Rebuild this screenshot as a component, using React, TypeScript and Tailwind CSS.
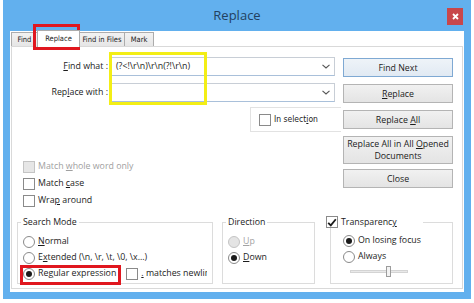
import React from "react";

function Acc({ children }: { children: React.ReactNode }) {
    return <u className="underline underline-offset-[1px]">{children}</u>;
}

function Checkbox({ checked = false, disabled = false }: { checked?: boolean; disabled?: boolean }) {
    return (
        <span
            className={`flex h-[12px] w-[12px] shrink-0 items-center justify-center border ${
                disabled ? "border-[#c4c4c4] bg-[#e6e6e6]" : "border-[#8a8a8a] bg-white"
            }`}
        >
            {checked && (
                <svg width="10" height="9" viewBox="0 0 10 9">
                    <path d="M1.2 4.8 L3.8 7.4 L8.8 1.2" fill="none" stroke="#1b1b1b" strokeWidth="1.8" />
                </svg>
            )}
        </span>
    );
}

function Radio({ checked = false, disabled = false }: { checked?: boolean; disabled?: boolean }) {
    return (
        <span
            className={`flex h-[12px] w-[12px] shrink-0 items-center justify-center rounded-full border ${
                disabled ? "border-[#c4c4c4] bg-[#e4e4e4]" : "border-[#8a8a8a] bg-white"
            }`}
        >
            {checked && <span className="h-[6px] w-[6px] rounded-full bg-[#1b1b1b]" />}
        </span>
    );
}

function Chevron() {
    return (
        <svg width="8" height="5" viewBox="0 0 8 5" className="mr-[4px]">
            <path d="M0.5 0.8 L4 4 L7.5 0.8" fill="none" stroke="#555" strokeWidth="1.1" />
        </svg>
    );
}

function Combo({ value }: { value?: string }) {
    return (
        <div className="ml-[3px] flex h-[19px] w-[224px] items-center justify-between border border-[#c8ced6] border-b-[#a9c0da] bg-white">
            <span className="pl-[4px] leading-none">{value}</span>
            <Chevron />
        </div>
    );
}

function Button({
    children,
    primary = false,
    className = "",
}: {
    children: React.ReactNode;
    primary?: boolean;
    className?: string;
}) {
    return (
        <div
            className={`flex items-center justify-center border text-center leading-[12px] ${
                primary
                    ? "border-[#7fa9d3] bg-gradient-to-b from-[#eef3f8] to-[#e1eaf3]"
                    : "border-[#b4b4b4] bg-gradient-to-b from-[#f1f1f1] to-[#e4e4e4]"
            } ${className}`}
        >
            {children}
        </div>
    );
}

function Tab({ label, active = false, width }: { label: string; active?: boolean; width: string }) {
    return (
        <div
            className={`-ml-px flex items-center justify-center border border-[#acacac] font-['DejaVu_Sans_Condensed','DejaVu_Sans',sans-serif] text-[7.5px] ${width} ${
                active
                    ? "relative z-10 -mb-px h-[17px] border-b-0 bg-white"
                    : "h-[14px] border-b-0 bg-gradient-to-b from-[#f2f2f2] to-[#e6e6e6]"
            }`}
        >
            {label}
        </div>
    );
}

export default function App() {
    return (
        <div className="relative h-[303px] w-[474px] bg-white font-['Open_Sans',sans-serif] text-[8.8px] text-[#1c1c1c]">
            <div className="ml-[3px] flex h-[299px] w-[468px] flex-col bg-[#62b0ee] px-[7px] pb-[7px]">
                {/* title bar */}
                <div className="relative flex h-[31px] shrink-0 items-center justify-center">
                    <span className="text-[13px] text-[#23415f]">Replace</span>
                    <div className="absolute right-[1px] top-[8px] flex h-[17px] w-[16px] items-center justify-center bg-[#c8474b]">
                        <svg width="7" height="7" viewBox="0 0 7 7">
                            <path d="M1 1 L6 6 M6 1 L1 6" stroke="white" strokeWidth="1.8" />
                        </svg>
                    </div>
                </div>

                <div className="flex flex-1 flex-col bg-white px-px pb-[3px]">
                    {/* tabs */}
                    <div className="flex h-[15px] shrink-0 items-end pl-px">
                        <Tab label="Find" width="w-[27px]" />
                        <Tab label="Replace" width="w-[43px]" active />
                        <Tab label="Find in Files" width="w-[46px]" />
                        <Tab label="Mark" width="w-[30px]" />
                    </div>

                    {/* tab page */}
                    <div className="flex flex-1 flex-col border border-[#d9d9d9]">
                        <div className="flex pt-[10px]">
                            <div className="flex w-[328px] flex-col">
                                <div className="flex h-[19px] items-center">
                                    <span className="w-[96px] text-right">
                                        <Acc>F</Acc>ind what :
                                    </span>
                                    <Combo value={"(?<!\\r\\n)\\r\\n(?!\\r\\n)"} />
                                </div>
                                <div className="mt-[7px] flex h-[19px] items-center">
                                    <span className="w-[96px] text-right">
                                        Rep<Acc>l</Acc>ace with :
                                    </span>
                                    <Combo />
                                </div>
                                <div className="ml-[238px] mt-[5px] flex h-[25px] w-[91px] items-center gap-[3px] border border-r-0 border-[#e2e2e2] pl-[8px]">
                                    <Checkbox />
                                    <span className="font-['DejaVu_Sans_Condensed','DejaVu_Sans',sans-serif] text-[8.5px]">
                                        In select<Acc>i</Acc>on
                                    </span>
                                </div>
                                <div className="mt-[28px] flex flex-col gap-[4px] pl-[11px]">
                                    <div className="flex h-[13px] items-center gap-[3px] text-[#a0a0a0]">
                                        <Checkbox disabled />
                                        <span>
                                            Match <Acc>w</Acc>hole word only
                                        </span>
                                    </div>
                                    <div className="flex h-[13px] items-center gap-[3px]">
                                        <Checkbox />
                                        <span>
                                            Match <Acc>c</Acc>ase
                                        </span>
                                    </div>
                                    <div className="flex h-[13px] items-center gap-[3px]">
                                        <Checkbox />
                                        <span>
                                            Wra<Acc>p</Acc> around
                                        </span>
                                    </div>
                                </div>
                            </div>

                            <div className="ml-[3px] flex w-[110px] flex-col gap-[7px] pt-[1px]">
                                <Button primary className="h-[19px]">
                                    Find Next
                                </Button>
                                <Button className="h-[19px]">
                                    <span>
                                        <Acc>R</Acc>eplace
                                    </span>
                                </Button>
                                <Button className="h-[19px]">
                                    <span>
                                        Replace <Acc>A</Acc>ll
                                    </span>
                                </Button>
                                <Button className="h-[28px]">
                                    <span>
                                        Replace All in All <Acc>O</Acc>pened
                                        <br />
                                        Documents
                                    </span>
                                </Button>
                                <Button className="-mt-[2px] h-[19px]">Close</Button>
                            </div>
                        </div>

                        {/* group boxes */}
                        <div className="mt-[9px] flex pl-[5px]">
                            <fieldset className="h-[68px] w-[196px] min-w-0 border border-[#dcdcdc] px-[5px]">
                                <legend className="-ml-[2px] px-[2px] leading-[12px]">Search Mode</legend>
                                <div className="flex flex-col gap-[4px] pt-[8px]">
                                    <div className="flex h-[12px] items-center gap-[3px]">
                                        <Radio />
                                        <span>
                                            <Acc>N</Acc>ormal
                                        </span>
                                    </div>
                                    <div className="flex h-[12px] items-center gap-[3px]">
                                        <Radio />
                                        <span className="whitespace-nowrap">
                                            E<Acc>x</Acc>tended (\n, \r, \t, \0, \x...)
                                        </span>
                                    </div>
                                    <div className="flex h-[12px] min-w-0 items-center whitespace-nowrap">
                                        <Radio checked />
                                        <span className="ml-[3px]">
                                            Re<Acc>g</Acc>ular expression
                                        </span>
                                        <span className="ml-[10px] flex w-0 min-w-0 flex-1 items-center gap-[3px] overflow-hidden">
                                            <Checkbox />
                                            <span>
                                                <Acc>.</Acc> matches newline
                                            </span>
                                        </span>
                                    </div>
                                </div>
                            </fieldset>

                            <fieldset className="ml-[9px] h-[68px] w-[93px] min-w-0 border border-[#dcdcdc] px-[5px]">
                                <legend className="-ml-[2px] px-[2px] leading-[12px]">Direction</legend>
                                <div className="flex flex-col gap-[4px] pt-[8px]">
                                    <div className="flex h-[12px] items-center gap-[3px] text-[#a3a3a3]">
                                        <Radio disabled />
                                        <span>
                                            <Acc>U</Acc>p
                                        </span>
                                    </div>
                                    <div className="flex h-[12px] items-center gap-[3px]">
                                        <Radio checked />
                                        <span>
                                            <Acc>D</Acc>own
                                        </span>
                                    </div>
                                </div>
                            </fieldset>

                            <fieldset className="ml-[15px] h-[68px] w-[123px] min-w-0 border border-[#dcdcdc] px-0">
                                <legend className="-ml-[5px] flex w-[97px] items-center gap-[3px] bg-white leading-[12px]">
                                    <Checkbox checked />
                                    <span>
                                        Transparenc<Acc>y</Acc>
                                    </span>
                                </legend>
                                <div className="flex flex-col gap-[4px] pl-[12px] pt-[7px]">
                                    <div className="flex h-[12px] items-center gap-[3px]">
                                        <Radio checked />
                                        <span>On losing focus</span>
                                    </div>
                                    <div className="flex h-[12px] items-center gap-[3px]">
                                        <Radio />
                                        <span>Always</span>
                                    </div>
                                    <div className="relative ml-[7px] mt-[3px] h-[3px] w-[58px] border border-[#d4d4d4] bg-[#e9e9e9]">
                                        <div className="absolute left-[35px] top-[-5px] h-[11px] w-[5px] border border-[#9c9c9c] bg-[#f3f3f3]" />
                                    </div>
                                </div>
                            </fieldset>
                        </div>
                    </div>
                </div>
            </div>

            {/* annotation boxes drawn over the dialog */}
            <div className="absolute left-[33px] top-[24px] h-[26px] w-[47px] border-[3px] border-[#e0171f]" />
            <div className="absolute left-[109px] top-[52px] h-[53px] w-[98px] border-[3px] border-[#f3ee16]" />
            <div className="absolute left-[20px] top-[265px] h-[20px] w-[101px] border-[3px] border-[#e0171f]" />
        </div>
    );
}
